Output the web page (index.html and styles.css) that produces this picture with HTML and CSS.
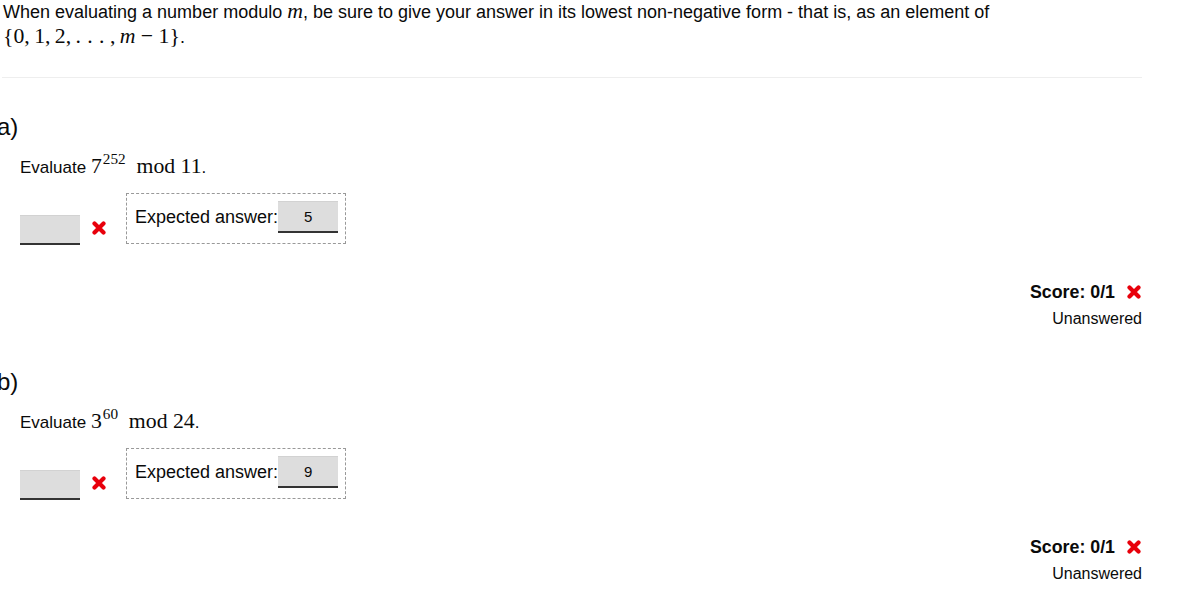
FILE: index.html
```html
<!DOCTYPE html>
<html lang="en">
<head>
  <meta charset="UTF-8" />
  <title>Modular arithmetic</title>
  <link rel="stylesheet" href="styles.css">
</head>
<body>
  <div class="question">
    <div class="statement">
      <p>When evaluating a number modulo <span class="math"><i>m</i></span>, be sure to give your answer in its lowest non-negative form - that is, as an element of <span class="math">{0,&thinsp;1,&thinsp;2,&thinsp;<span class="dots">.&thinsp;.&thinsp;.</span>&thinsp;,&thinsp;<i>m</i>&nbsp;−&nbsp;1}</span>.</p>
    </div>

    <hr class="divider">

    <section class="part">
      <h3 class="part-label">a)</h3>
      <div class="part-body">
        <p class="prompt">Evaluate <span class="math">7<sup>252</sup>&nbsp;&nbsp;mod&nbsp;11</span>.</p>
        <div class="answer-row">
          <input class="answer" type="text" />
          <span class="cross">
            <svg viewBox="0 0 14 14" width="14" height="14"><path d="M2.5 2.5 L11.5 11.5 M11.5 2.5 L2.5 11.5" /></svg>
          </span>
          <div class="expected">
            <span>Expected answer:</span>
            <span class="expected-value">5</span>
          </div>
        </div>
      </div>
      <div class="score">
        <div class="score-line">
          <strong>Score: 0/1</strong>
          <span class="cross">
            <svg viewBox="0 0 14 14" width="14" height="14"><path d="M2.5 2.5 L11.5 11.5 M11.5 2.5 L2.5 11.5" /></svg>
          </span>
        </div>
        <div class="status">Unanswered</div>
      </div>
    </section>

    <section class="part">
      <h3 class="part-label">b)</h3>
      <div class="part-body">
        <p class="prompt">Evaluate <span class="math">3<sup>60</sup>&nbsp;&nbsp;mod&nbsp;24</span>.</p>
        <div class="answer-row">
          <input class="answer" type="text" />
          <span class="cross">
            <svg viewBox="0 0 14 14" width="14" height="14"><path d="M2.5 2.5 L11.5 11.5 M11.5 2.5 L2.5 11.5" /></svg>
          </span>
          <div class="expected">
            <span>Expected answer:</span>
            <span class="expected-value">9</span>
          </div>
        </div>
      </div>
      <div class="score">
        <div class="score-line">
          <strong>Score: 0/1</strong>
          <span class="cross">
            <svg viewBox="0 0 14 14" width="14" height="14"><path d="M2.5 2.5 L11.5 11.5 M11.5 2.5 L2.5 11.5" /></svg>
          </span>
        </div>
        <div class="status">Unanswered</div>
      </div>
    </section>
  </div>
</body>
</html>
```

FILE: styles.css
```css
* {
  box-sizing: border-box;
  margin: 0;
  padding: 0;
}

body {
  font-family: 'Liberation Sans', Arial, sans-serif;
  color: #0a0a0a;
  background: #fff;
  overflow: hidden;
}

.question {
  width: 1140px;
  margin-left: 2px;
}

.statement p {
  font-size: 18px;
  line-height: 25px;
  padding-left: 1px;
}

.math {
  font-family: 'Liberation Serif', 'Times New Roman', serif;
  font-size: 1.21em;
  line-height: 1;
  white-space: nowrap;
}

.math i {
  font-style: italic;
}

.math .dots {
  letter-spacing: 1px;
}

.math sup {
  font-size: 0.7em;
  vertical-align: 0.6em;
  line-height: 0;
  margin-left: 1px;
}

.divider {
  border: none;
  border-top: 1px solid #eee;
  margin-top: 27px;
}

.part {
  padding-top: 35px;
  padding-bottom: 3px;
}

.part-label {
  font-size: 24px;
  font-weight: normal;
  line-height: 28px;
  margin-left: -5px;
}

.part-body {
  padding-left: 18px;
}

.prompt {
  font-size: 17px;
  line-height: 26px;
  margin-top: 14px;
}

.prompt .math {
  font-size: 1.28em;
}

.answer-row {
  display: flex;
  align-items: flex-end;
  margin-top: 12px;
}

.answer {
  width: 60px;
  height: 30px;
  background: #ddd;
  border: none;
  border-top: 1px solid #d2d2d2;
  border-bottom: 2px solid #333;
  font-size: 16px;
}

.cross {
  display: inline-flex;
  width: 14px;
  height: 14px;
}

.cross svg path {
  fill: none;
  stroke: #e8000b;
  stroke-width: 4.2;
  stroke-linecap: round;
}

.answer-row .cross {
  margin: 0 20px 10px 12px;
}

.expected {
  display: flex;
  align-items: center;
  border: 1px dashed #999;
  padding: 7px 7px 10px 8px;
  font-size: 18px;
  margin-bottom: 1px;
}

.expected-value {
  width: 60px;
  height: 32px;
  background: #ddd;
  border-top: 1px solid #d2d2d2;
  border-bottom: 2px solid #333;
  font-size: 15px;
  display: flex;
  align-items: center;
  justify-content: center;
}

.score {
  text-align: right;
  margin-top: 36px;
}

.score-line {
  display: flex;
  justify-content: flex-end;
  align-items: center;
  gap: 12px;
  padding-right: 1px;
  font-size: 17.8px;
  line-height: 22px;
}

.status {
  font-size: 16px;
  line-height: 22px;
  margin-top: 5px;
}
```
